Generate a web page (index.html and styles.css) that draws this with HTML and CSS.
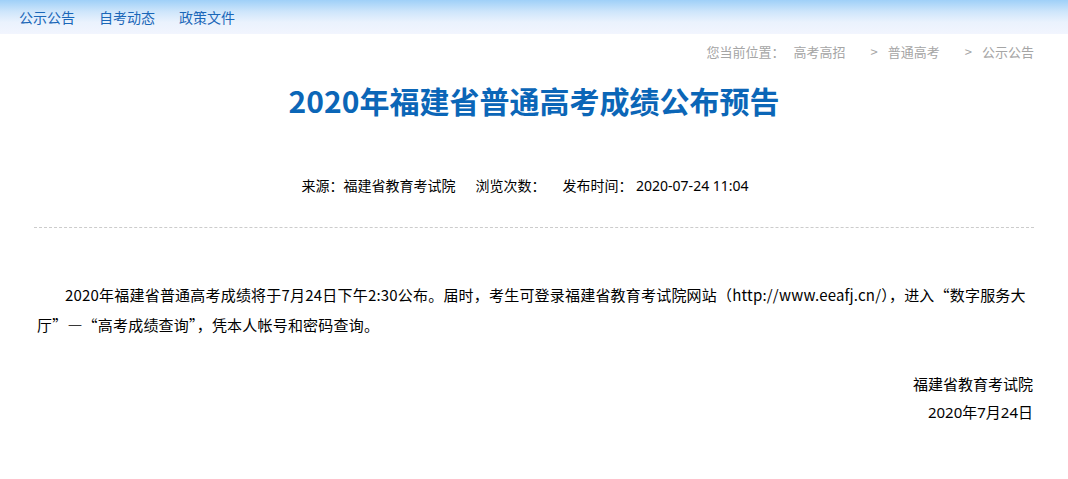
FILE: index.html
```html
<!DOCTYPE html>
<html lang="zh-CN">
<head>
<meta charset="utf-8">
<title>2020年福建省普通高考成绩公布预告</title>
<link rel="stylesheet" href="styles.css">
</head>
<body>
<header class="topbar">
  <nav class="topnav">
    <a href="#">公示公告</a>
    <a href="#">自考动态</a>
    <a href="#">政策文件</a>
  </nav>
</header>
<main class="page">
  <div class="crumbs">
    <span>您当前位置：</span>
    <a href="#" class="first">高考高招</a>
    <span class="sep">&gt;</span>
    <a href="#">普通高考</a>
    <span class="sep">&gt;</span>
    <a href="#">公示公告</a>
  </div>
  <h1 class="title">2020年福建省普通高考成绩公布预告</h1>
  <div class="meta">
    <span>来源：福建省教育考试院</span>
    <span>浏览次数：</span>
    <span class="time">发布时间： 2020-07-24 11:04</span>
  </div>
  <article class="content">
    <p class="para">2020年福建省普通高考成绩将于7月24日下午2:30公布。届时，考生可登录福建省教育考试院网站（http://www.eeafj.cn/），进入“数字服务大厅”—“高考成绩查询”，凭本人帐号和密码查询。</p>
    <p class="sign sign-org">福建省教育考试院</p>
    <p class="sign sign-date">2020年7月24日</p>
  </article>
</main>
</body>
</html>
```
FILE: styles.css
```css
html, body {
  margin: 0;
  padding: 0;
  background: #fff;
  font-family: "Noto Sans CJK SC", sans-serif;
  color: #000;
}

a { text-decoration: none; }

.topbar {
  height: 34px;
  background: linear-gradient(to bottom, #9fd0f8 0%, #cfe6fb 35%, #eaf2fd 65%, #f2f5fe 100%);
}

.topnav {
  display: flex;
  gap: 24px;
  padding-left: 19px;
  height: 34px;
  align-items: center;
}

.topnav a {
  color: #1a67b8;
  font-size: 14px;
  line-height: 34px;
}

.page {
  width: 1000px;
  margin: 0 auto;
}

.crumbs {
  display: flex;
  justify-content: flex-end;
  align-items: center;
  height: 34px;
  font-size: 13px;
  color: #a5a5a5;
}

.crumbs a { color: #a5a5a5; margin-left: 10px; }
.crumbs a.first { margin-left: 9px; }
.crumbs .sep { margin-left: 25px; }

.title {
  margin: 0;
  text-align: center;
  font-size: 30px;
  font-weight: bold;
  color: #0b66b7;
  line-height: 64px;
}

.meta {
  display: flex;
  justify-content: center;
  gap: 20px;
  margin-top: 42px;
  padding-right: 18px;
  font-family: "Noto Sans", "Noto Sans CJK SC", sans-serif;
  font-size: 14px;
  line-height: 24px;
  padding-bottom: 29px;
  border-bottom: 1px dashed #cccccc;
}

.meta .time { margin-left: -3px; }

.content {
  padding: 52px 1px 0 3px;
  font-size: 15px;
}

.para {
  margin: 0;
  line-height: 30px;
  text-indent: 28px;
  letter-spacing: 0.2px;
}

.sign {
  margin: 0;
  text-align: right;
  line-height: 29px;
}

.sign-org { margin-top: 29px; }
.sign-date { font-family: "Noto Sans", "Noto Sans CJK SC", sans-serif; }
```
